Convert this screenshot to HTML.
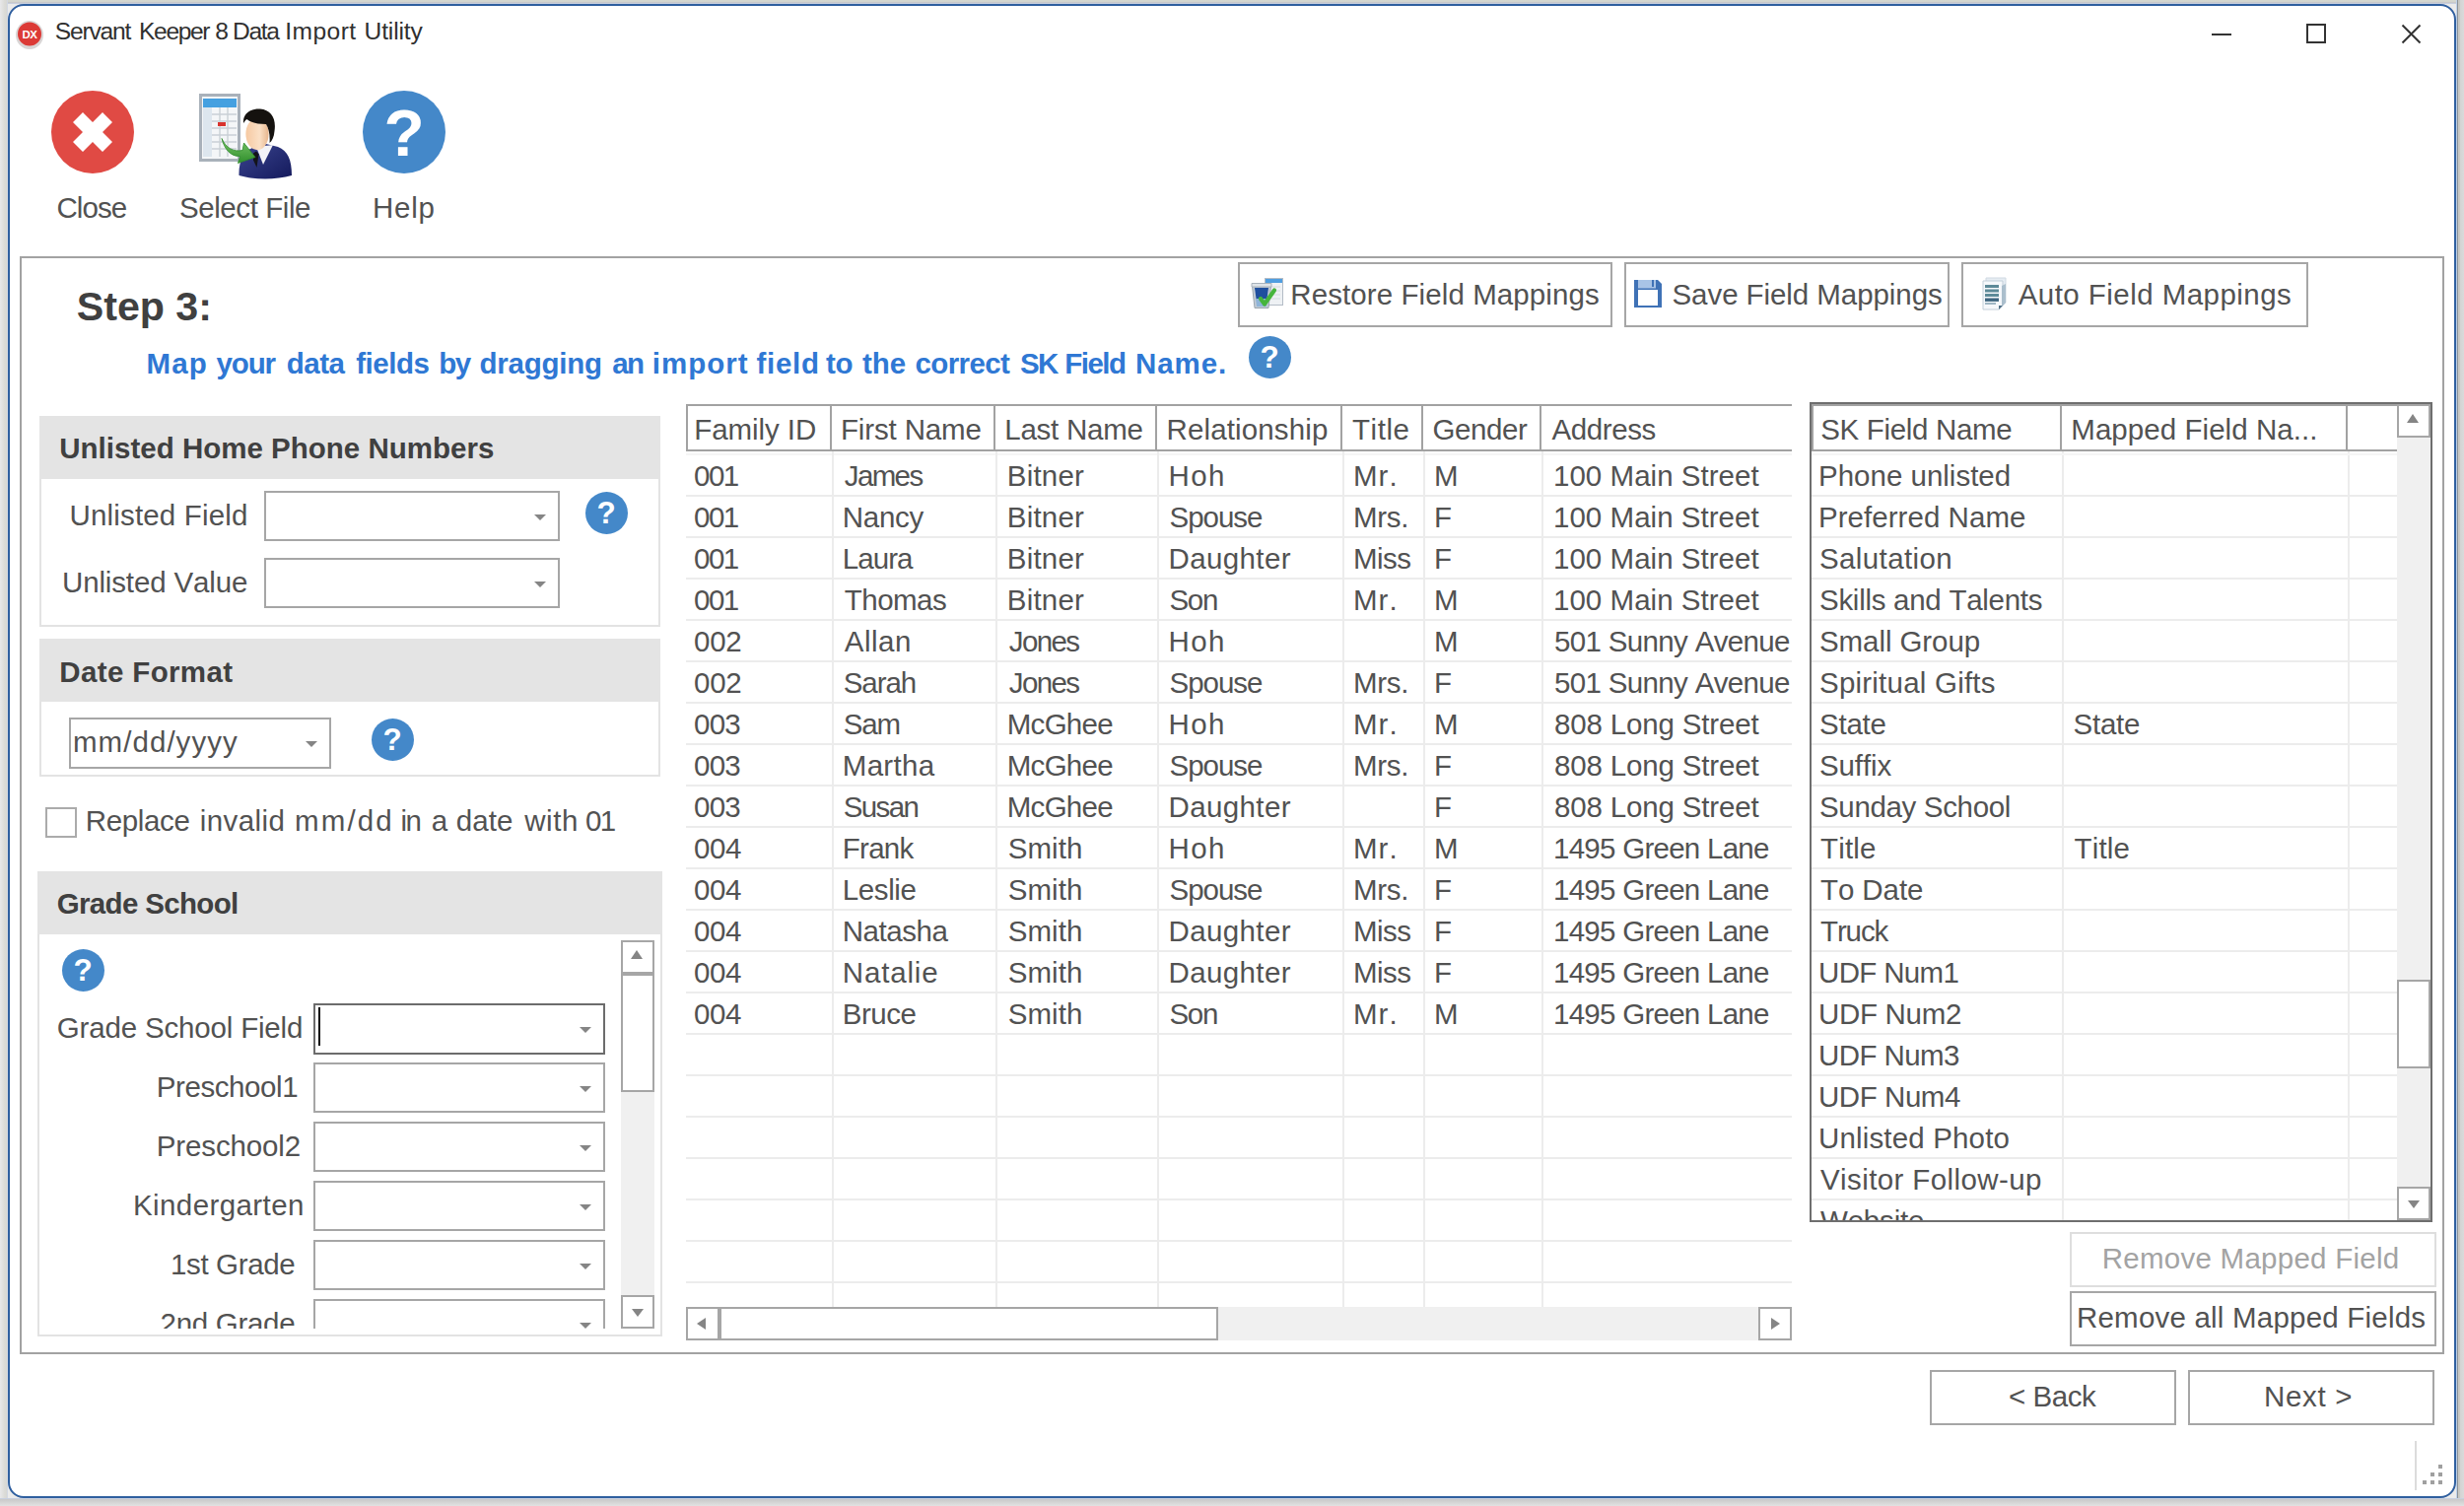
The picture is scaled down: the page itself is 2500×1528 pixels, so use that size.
<!DOCTYPE html>
<html lang="en"><head><meta charset="utf-8"><title>Servant Keeper 8 Data Import Utility</title>
<style>
html,body{margin:0;padding:0}
body{width:2500px;height:1528px;overflow:hidden;position:relative;background:#ebebeb;font-family:"Liberation Sans",sans-serif;font-size:29.5px;color:#525252;font-kerning:none}
div,.a,.t{position:absolute;box-sizing:border-box}
.t{white-space:nowrap}
#win{left:8px;top:4px;width:2484px;height:1516px;background:#fff;border:2px solid #2f5f9f;border-radius:16px;}
.hp{border-radius:50%;background:#4488c9;color:#fff;font-weight:700;text-align:center}
.ad{width:0;height:0;border-left:6px solid transparent;border-right:6px solid transparent;border-top:6px solid #858585}
.adn{width:0;height:0;border-left:6px solid transparent;border-right:6px solid transparent;border-top:8px solid #858585}
.au{width:0;height:0;border-left:6px solid transparent;border-right:6px solid transparent;border-bottom:9px solid #858585}
.al{width:0;height:0;border-top:6px solid transparent;border-bottom:6px solid transparent;border-right:9px solid #858585}
.ar{width:0;height:0;border-top:6px solid transparent;border-bottom:6px solid transparent;border-left:9px solid #858585}
</style></head>
<body>
<div style="left:0;top:0;width:2500px;height:4px;background:linear-gradient(#d5d8cf,#d3d5cf 40%,#c8c8c8 60%,#c8d2e8)"></div>
<div style="left:0;top:0;width:8px;height:1528px;background:linear-gradient(90deg,#e8e8ea,#dcdcd8 55%,#d8d8d4 80%,#d0d8e8)"></div>
<div style="left:2492px;top:0;width:8px;height:1528px;background:linear-gradient(90deg,#bed2eb 0,#bed2eb 12%,#8c9196 13%,#8c9196 25%,#c8c8c4 26%,#c8c8c4 50%,#d4d4d4 55%,#dadada)"></div>
<div style="left:0;top:1520px;width:2500px;height:8px;background:linear-gradient(#c8d0e0 0,#c8d0e0 12%,#c8c8c8 13%,#e2e2e2)"></div>
<div id="win"></div>
<svg class="a" style="left:15px;top:19px" width="30" height="32" viewBox="0 0 30 32">
<ellipse cx="15" cy="16.5" rx="14" ry="14.5" fill="#b9b3b3" opacity=".55"/>
<circle cx="15" cy="15.5" r="12" fill="#dc3a36"/>
<text x="15" y="19.6" text-anchor="middle" font-family="Liberation Sans, sans-serif" font-weight="700" font-size="11.5" letter-spacing="-0.6" fill="#fff">DX</text></svg>
<span class="t" style="left:55.75px;top:16.00px;line-height:31px;letter-spacing:-1.179px;font-size:24.6px;color:#303030;">Servant </span>
<span class="t" style="left:141.00px;top:16.00px;line-height:31px;letter-spacing:-1.353px;font-size:24.6px;color:#303030;">Keeper </span>
<span class="t" style="left:218.25px;top:16.00px;line-height:31px;letter-spacing:-0.060px;font-size:24.6px;color:#303030;">8 </span>
<span class="t" style="left:236.00px;top:16.00px;line-height:31px;letter-spacing:-1.353px;font-size:24.6px;color:#303030;">Data </span>
<span class="t" style="left:289.25px;top:16.00px;line-height:31px;letter-spacing:0.427px;font-size:24.6px;color:#303030;">Import </span>
<span class="t" style="left:369.60px;top:16.00px;line-height:31px;letter-spacing:-0.170px;font-size:24.6px;color:#303030;">Utility</span>
<svg class="a" style="left:2230px;top:14px" width="240" height="40" viewBox="0 0 240 40" fill="none" stroke="#333" stroke-width="2">
<path d="M14 21H34"/><rect x="111" y="11" width="18" height="18"/><path d="M207.5 11.5L225.5 29.5M225.5 11.5L207.5 29.5"/></svg>
<svg class="a" style="left:52px;top:92px" width="84" height="84" viewBox="0 0 84 84">
<circle cx="42" cy="42" r="42" fill="#e04a44"/>
<path d="M22 32L32 22L42 32L52 22L62 32L52 42L62 52L52 62L42 52L32 62L22 52L32 42Z" fill="#fff"/></svg>
<span class="t" style="left:57.50px;top:192.00px;line-height:37px;letter-spacing:-0.941px;">Close</span>
<svg class="a" style="left:200px;top:92px" width="100" height="92" viewBox="0 0 100 92">
<defs>
<linearGradient id="sk" x1="0" x2="1"><stop offset="0" stop-color="#f6c9a2"/><stop offset=".6" stop-color="#fbe0c6"/><stop offset="1" stop-color="#e7b58c"/></linearGradient>
<linearGradient id="su" x1="0" x2="1" y1="0" y2="1"><stop offset="0" stop-color="#3b4590"/><stop offset="1" stop-color="#141a5c"/></linearGradient>
<linearGradient id="gr" x1="0" x2="0" y1="0" y2="1"><stop offset="0" stop-color="#7cc66a"/><stop offset="1" stop-color="#2f8f2c"/></linearGradient>
</defs>
<rect x="3.5" y="4.5" width="39" height="66" fill="#f4f6f8" stroke="#a9b1ba" stroke-width="3"/>
<rect x="6" y="8" width="34" height="9" fill="#45a0e0"/>
<rect x="6" y="17" width="9" height="50" fill="#dde6ee"/>
<path d="M15 24H40M15 31H40M15 38H40M15 45H40M15 52H40M15 59H40M23 17V67M31 17V67" stroke="#c9d0d6" stroke-width="1.4"/>
<rect x="21" y="32" width="8" height="4" fill="#d9332e"/>
<path d="M42.5 86C42 70 48 61 57 57.5L66 53L82 57C92 61 96 70 96 86C80 90.5 58 90.5 42.5 86Z" fill="url(#su)"/>
<path d="M60 57L67 75L77 55Z" fill="#f3f3f7"/>
<path d="M57 63.5L60 61.5L62.5 64.5L60.5 78L57 70.5Z" fill="#14141b"/>
<ellipse cx="61" cy="44" rx="11.6" ry="16.2" fill="url(#sk)"/>
<path d="M47 33C46 23 55 18 64 18.5C75 19.5 80.5 28 78.5 41C78 47 76 51 73.5 53C74 45 73 39 70 34C63 34 55 33 50.5 29C49 30 48 31.5 47 33Z" fill="#15120f"/>
<path d="M25 48.5C29 58 37 62.5 46 60.5L47.5 53L59 67.5L41.5 73.5L43.5 66.5C34 67 27.5 59 25 48.5Z" fill="url(#gr)" stroke="#2c8a2a" stroke-width=".8"/>
</svg>
<span class="t" style="left:182.00px;top:192.00px;line-height:37px;letter-spacing:-0.431px;">Select File</span>
<div class="hp" style="left:368px;top:92px;width:84px;height:84px;font-size:67.5px;line-height:85px">?</div>
<span class="t" style="left:378.00px;top:192.00px;line-height:37px;letter-spacing:0.779px;">Help</span>
<div style="left:20px;top:260px;width:2460px;height:1114px;border:2px solid #a2a2a2"></div>
<span class="t" style="left:77.75px;top:285.00px;line-height:52px;letter-spacing:-0.017px;font-size:41.2px;font-weight:700;color:#404040;">Step 3:</span>
<span class="t" style="left:148.50px;top:350.00px;line-height:37px;letter-spacing:1.135px;font-weight:700;color:#2f78d4;">Map </span>
<span class="t" style="left:219.50px;top:350.00px;line-height:37px;letter-spacing:-1.149px;font-weight:700;color:#2f78d4;">your </span>
<span class="t" style="left:290.75px;top:350.00px;line-height:37px;letter-spacing:-0.500px;font-weight:700;color:#2f78d4;">data </span>
<span class="t" style="left:361.25px;top:350.00px;line-height:37px;letter-spacing:-0.478px;font-weight:700;color:#2f78d4;">fields </span>
<span class="t" style="left:445.25px;top:350.00px;line-height:37px;letter-spacing:-1.623px;font-weight:700;color:#2f78d4;">by </span>
<span class="t" style="left:486.50px;top:350.00px;line-height:37px;letter-spacing:-0.237px;font-weight:700;color:#2f78d4;">dragging </span>
<span class="t" style="left:621.25px;top:350.00px;line-height:37px;letter-spacing:-1.623px;font-weight:700;color:#2f78d4;">an </span>
<span class="t" style="left:661.75px;top:350.00px;line-height:37px;letter-spacing:1.011px;font-weight:700;color:#2f78d4;">import </span>
<span class="t" style="left:767.50px;top:350.00px;line-height:37px;letter-spacing:0.719px;font-weight:700;color:#2f78d4;">field </span>
<span class="t" style="left:838.00px;top:350.00px;line-height:37px;letter-spacing:-0.324px;font-weight:700;color:#2f78d4;">to </span>
<span class="t" style="left:875.00px;top:350.00px;line-height:37px;letter-spacing:-0.047px;font-weight:700;color:#2f78d4;">the </span>
<span class="t" style="left:928.50px;top:350.00px;line-height:37px;letter-spacing:-0.617px;font-weight:700;color:#2f78d4;">correct </span>
<span class="t" style="left:1035.00px;top:350.00px;line-height:37px;letter-spacing:-1.623px;font-weight:700;color:#2f78d4;">SK </span>
<span class="t" style="left:1080.25px;top:350.00px;line-height:37px;letter-spacing:-1.517px;font-weight:700;color:#2f78d4;">Field </span>
<span class="t" style="left:1152.00px;top:350.00px;line-height:37px;letter-spacing:0.913px;font-weight:700;color:#2f78d4;">Name.</span>
<div class="hp" style="left:1266.5px;top:340.5px;width:43.0px;height:43.0px;font-size:31.5px;line-height:42.0px">?</div>
<div style="left:1256px;top:266px;width:380px;height:66px;border:2px solid #a6a6a6;background:#fff"></div>
<svg class="a" style="left:1269px;top:281px" width="34" height="34" viewBox="0 0 34 34">
<rect x="14.5" y="1.5" width="18" height="27" fill="#eef1f4" stroke="#b3bcc6"/>
<rect x="15" y="2" width="17" height="4" fill="#4f9ee0"/>
<path d="M17 10H30M17 14H30M17 18H30M17 22H30" stroke="#d5dae0"/>
<path d="M1.5 9L4 31.5H18L20.5 9Z" fill="#c3ccd4" stroke="#9aa6b0"/>
<path d="M1 6.5H21V10H1Z" fill="#dfe4e8" stroke="#a8b2bc"/>
<path d="M4 11H18L16.5 22H5.5Z" fill="#1f4f9e"/>
<path d="M5 22H17L16 30H6Z" fill="#8fb4d8"/>
<path d="M10 22L14 27.5L24 13.5" stroke="#46b53c" stroke-width="4.2" fill="none" stroke-linecap="round" stroke-linejoin="round"/>
</svg>
<span class="t" style="left:1309.25px;top:280.00px;line-height:37px;letter-spacing:0.094px;">Restore Field Mappings</span>
<div style="left:1648px;top:266px;width:330px;height:66px;border:2px solid #a6a6a6;background:#fff"></div>
<svg class="a" style="left:1658px;top:284px" width="28" height="28" viewBox="0 0 28 28">
<path d="M0 0H24L28 4V28H0Z" fill="#3f72b6"/>
<rect x="4" y="0" width="18" height="8.5" fill="#a9c4e6"/>
<rect x="18" y="0" width="2" height="7" fill="#3f72b6"/>
<rect x="4" y="10" width="20" height="16" fill="#fff"/></svg>
<span class="t" style="left:1696.50px;top:280.00px;line-height:37px;letter-spacing:-0.068px;">Save Field Mappings</span>
<div style="left:1990px;top:266px;width:352px;height:66px;border:2px solid #a6a6a6;background:#fff"></div>
<svg class="a" style="left:2009px;top:280px" width="28" height="36" viewBox="0 0 28 36">
<path d="M6 2H26V27L22 31H6Z" fill="#e6edf3" stroke="#cfd9e2"/>
<path d="M3 5H23V30L19 34H3Z" fill="#f5f8fb" stroke="#c3cfd9"/>
<path d="M19 34V30H23Z" fill="#4f6f86"/>
<path d="M22 10L26 8V27L22 31Z" fill="#9eb4c4" opacity=".8"/>
<rect x="5" y="9" width="14" height="3" fill="#5d8a98"/><rect x="5" y="13.5" width="14" height="3" fill="#5d8a98"/>
<rect x="5" y="18" width="14" height="3" fill="#5d8a98"/><rect x="5" y="22.5" width="14" height="3.4" fill="#3f6680"/>
<rect x="5" y="27" width="11" height="2" fill="#9fb6c4"/>
</svg>
<span class="t" style="left:2047.75px;top:280.00px;line-height:37px;letter-spacing:0.448px;">Auto Field Mappings</span>
<div style="left:40px;top:422px;width:630px;height:214px;border:2px solid #e3e3e3;background:#fff"></div>
<div style="left:40px;top:422px;width:630px;height:64px;background:#e4e4e4"></div>
<span class="t" style="left:60.25px;top:436.00px;line-height:37px;letter-spacing:0.009px;font-weight:700;color:#404040;">Unlisted Home Phone Numbers</span>
<span class="t" style="left:70.50px;top:504.00px;line-height:37px;letter-spacing:0.169px;">Unlisted Field</span>
<div style="left:268px;top:498px;width:300px;height:51px;border:2px solid #a6a6a6;background:#fff"></div>
<div class="ad" style="left:541.5px;top:521.5px"></div>
<div class="hp" style="left:593.5px;top:499.0px;width:43.0px;height:43.0px;font-size:31.5px;line-height:42.0px">?</div>
<span class="t" style="left:63.00px;top:572.00px;line-height:37px;letter-spacing:-0.140px;">Unlisted Value</span>
<div style="left:268px;top:566px;width:300px;height:51px;border:2px solid #a6a6a6;background:#fff"></div>
<div class="ad" style="left:541.5px;top:589.5px"></div>
<div style="left:40px;top:648px;width:630px;height:140px;border:2px solid #e3e3e3;background:#fff"></div>
<div style="left:40px;top:648px;width:630px;height:64px;background:#e4e4e4"></div>
<span class="t" style="left:60.25px;top:663.00px;line-height:37px;letter-spacing:0.371px;font-weight:700;color:#404040;">Date Format</span>
<div style="left:70px;top:728px;width:266px;height:52px;border:2px solid #a6a6a6;background:#fff"></div>
<div class="ad" style="left:309.5px;top:752.0px"></div>
<span class="t" style="left:74.00px;top:734.00px;line-height:37px;letter-spacing:1.044px;">mm/dd/yyyy</span>
<div class="hp" style="left:376.5px;top:728.5px;width:43.0px;height:43.0px;font-size:31.5px;line-height:42.0px">?</div>
<div style="left:46px;top:819px;width:32px;height:31px;border:2px solid #ababab;background:#fff"></div>
<span class="t" style="left:86.75px;top:814.00px;line-height:37px;letter-spacing:-0.346px;">Replace </span>
<span class="t" style="left:202.75px;top:814.00px;line-height:37px;letter-spacing:0.421px;">invalid </span>
<span class="t" style="left:299.00px;top:814.00px;line-height:37px;letter-spacing:2.125px;">mm/dd </span>
<span class="t" style="left:406.50px;top:814.00px;line-height:37px;letter-spacing:-1.623px;">in </span>
<span class="t" style="left:437.75px;top:814.00px;line-height:37px;letter-spacing:-0.080px;">a </span>
<span class="t" style="left:462.75px;top:814.00px;line-height:37px;letter-spacing:0.080px;">date </span>
<span class="t" style="left:532.25px;top:814.00px;line-height:37px;letter-spacing:0.565px;">with </span>
<span class="t" style="left:594.00px;top:814.00px;line-height:37px;letter-spacing:-1.623px;">01</span>
<div style="left:38px;top:884px;width:634px;height:472px;border:2px solid #e3e3e3;background:#fff"></div>
<div style="left:38px;top:884px;width:634px;height:64px;background:#e4e4e4"></div>
<span class="t" style="left:57.75px;top:898.00px;line-height:37px;letter-spacing:-0.668px;font-weight:700;color:#404040;">Grade School</span>
<div class="hp" style="left:62.5px;top:962.5px;width:43.0px;height:43.0px;font-size:31.5px;line-height:42.0px">?</div>
<span class="t" style="left:57.75px;top:1024.00px;line-height:37px;letter-spacing:-0.169px;">Grade School Field</span>
<div style="left:318px;top:1018px;width:296px;height:52px;border:2px solid #6c6c6c;background:#fff"></div>
<div class="ad" style="left:587.5px;top:1042.0px"></div>
<div style="left:323px;top:1022px;width:2px;height:39px;background:#111"></div>
<span class="t" style="left:158.75px;top:1084.00px;line-height:37px;letter-spacing:-0.409px;">Preschool1</span>
<div style="left:318px;top:1078px;width:296px;height:51px;border:2px solid #a6a6a6;background:#fff"></div>
<div class="ad" style="left:587.5px;top:1101.5px"></div>
<span class="t" style="left:158.75px;top:1144.00px;line-height:37px;letter-spacing:-0.131px;">Preschool2</span>
<div style="left:318px;top:1138px;width:296px;height:51px;border:2px solid #a6a6a6;background:#fff"></div>
<div class="ad" style="left:587.5px;top:1161.5px"></div>
<span class="t" style="left:135.00px;top:1204.00px;line-height:37px;letter-spacing:0.408px;">Kindergarten</span>
<div style="left:318px;top:1198px;width:296px;height:51px;border:2px solid #a6a6a6;background:#fff"></div>
<div class="ad" style="left:587.5px;top:1221.5px"></div>
<span class="t" style="left:173.00px;top:1264.00px;line-height:37px;letter-spacing:-0.360px;">1st Grade</span>
<div style="left:318px;top:1258px;width:296px;height:51px;border:2px solid #a6a6a6;background:#fff"></div>
<div class="ad" style="left:587.5px;top:1281.5px"></div>
<div class="a" style="left:40px;top:1310px;width:586px;height:37.5px;overflow:hidden">
<div style="left:278px;top:8px;width:296px;height:51px;border:2px solid #a6a6a6;background:#fff"></div>
<div class="ad" style="left:547.5px;top:31.5px"></div>
<span class="t" style="left:122.50px;top:14.00px;line-height:37px;letter-spacing:-0.281px;">2nd Grade</span>
</div>
<div style="left:630px;top:954px;width:34px;height:394px;background:#f0f0f0"></div>
<div style="left:630px;top:954px;width:34px;height:34px;border:2px solid #a6a6a6;background:#fff"></div>
<div class="au" style="left:640.0px;top:964.0px"></div>
<div style="left:630px;top:988px;width:34px;height:120px;border:2px solid #a6a6a6;background:#fff"></div>
<div style="left:630px;top:1314px;width:34px;height:34px;border:2px solid #a6a6a6;background:#fff"></div>
<div class="adn" style="left:641.0px;top:1327.5px"></div>
<div style="left:696px;top:410px;width:1122px;height:48px;border:2px solid #a2a2a2;border-right:0;background:#fff"></div>
<div style="left:842px;top:412px;width:2px;height:44px;background:#a2a2a2"></div>
<div style="left:1008px;top:412px;width:2px;height:44px;background:#a2a2a2"></div>
<div style="left:1172px;top:412px;width:2px;height:44px;background:#a2a2a2"></div>
<div style="left:1360px;top:412px;width:2px;height:44px;background:#a2a2a2"></div>
<div style="left:1442px;top:412px;width:2px;height:44px;background:#a2a2a2"></div>
<div style="left:1562px;top:412px;width:2px;height:44px;background:#a2a2a2"></div>
<span class="t" style="left:704.25px;top:417.00px;line-height:37px;letter-spacing:-0.062px;">Family ID</span>
<span class="t" style="left:853.00px;top:417.00px;line-height:37px;letter-spacing:-0.147px;">First Name</span>
<span class="t" style="left:1019.25px;top:417.00px;line-height:37px;letter-spacing:-0.249px;">Last Name</span>
<span class="t" style="left:1183.50px;top:417.00px;line-height:37px;letter-spacing:0.141px;">Relationship</span>
<span class="t" style="left:1372.00px;top:417.00px;line-height:37px;letter-spacing:0.544px;">Title</span>
<span class="t" style="left:1453.50px;top:417.00px;line-height:37px;letter-spacing:-0.414px;">Gender</span>
<span class="t" style="left:1574.50px;top:417.00px;line-height:37px;letter-spacing:-0.412px;">Address</span>
<div style="left:696px;top:460px;width:1122px;height:2px;background:#f5f5f5"></div>
<div style="left:696px;top:502px;width:1122px;height:2px;background:#ececec"></div>
<div style="left:696px;top:544px;width:1122px;height:2px;background:#ececec"></div>
<div style="left:696px;top:586px;width:1122px;height:2px;background:#ececec"></div>
<div style="left:696px;top:628px;width:1122px;height:2px;background:#ececec"></div>
<div style="left:696px;top:670px;width:1122px;height:2px;background:#ececec"></div>
<div style="left:696px;top:712px;width:1122px;height:2px;background:#ececec"></div>
<div style="left:696px;top:754px;width:1122px;height:2px;background:#ececec"></div>
<div style="left:696px;top:796px;width:1122px;height:2px;background:#ececec"></div>
<div style="left:696px;top:838px;width:1122px;height:2px;background:#ececec"></div>
<div style="left:696px;top:880px;width:1122px;height:2px;background:#ececec"></div>
<div style="left:696px;top:922px;width:1122px;height:2px;background:#ececec"></div>
<div style="left:696px;top:964px;width:1122px;height:2px;background:#ececec"></div>
<div style="left:696px;top:1006px;width:1122px;height:2px;background:#ececec"></div>
<div style="left:696px;top:1048px;width:1122px;height:2px;background:#ececec"></div>
<div style="left:696px;top:1090px;width:1122px;height:2px;background:#ececec"></div>
<div style="left:696px;top:1132px;width:1122px;height:2px;background:#ececec"></div>
<div style="left:696px;top:1174px;width:1122px;height:2px;background:#ececec"></div>
<div style="left:696px;top:1216px;width:1122px;height:2px;background:#ececec"></div>
<div style="left:696px;top:1258px;width:1122px;height:2px;background:#ececec"></div>
<div style="left:696px;top:1300px;width:1122px;height:2px;background:#ececec"></div>
<div style="left:844px;top:458px;width:2px;height:868px;background:#ececec"></div>
<div style="left:1010px;top:458px;width:2px;height:868px;background:#ececec"></div>
<div style="left:1174px;top:458px;width:2px;height:868px;background:#ececec"></div>
<div style="left:1362px;top:458px;width:2px;height:868px;background:#ececec"></div>
<div style="left:1444px;top:458px;width:2px;height:868px;background:#ececec"></div>
<div style="left:1564px;top:458px;width:2px;height:868px;background:#ececec"></div>
<div class="a" style="left:696px;top:458px;width:1120px;height:868px;overflow:hidden">
<span class="t" style="left:8.00px;top:6.00px;line-height:37px;letter-spacing:-1.531px;">001</span>
<span class="t" style="left:160.75px;top:6.00px;line-height:37px;letter-spacing:-1.623px;">James</span>
<span class="t" style="left:325.75px;top:6.00px;line-height:37px;letter-spacing:0.202px;">Bitner</span>
<span class="t" style="left:489.50px;top:6.00px;line-height:37px;letter-spacing:1.395px;">Hoh</span>
<span class="t" style="left:677.00px;top:6.00px;line-height:37px;letter-spacing:1.051px;">Mr.</span>
<span class="t" style="left:759.00px;top:6.00px;line-height:37px;letter-spacing:-0.105px;">M</span>
<span class="t" style="left:880.00px;top:6.00px;line-height:37px;letter-spacing:0.031px;">100 Main Street</span>
<span class="t" style="left:8.00px;top:48.00px;line-height:37px;letter-spacing:-1.531px;">001</span>
<span class="t" style="left:158.75px;top:48.00px;line-height:37px;letter-spacing:-0.279px;">Nancy</span>
<span class="t" style="left:325.75px;top:48.00px;line-height:37px;letter-spacing:0.202px;">Bitner</span>
<span class="t" style="left:490.50px;top:48.00px;line-height:37px;letter-spacing:-1.029px;">Spouse</span>
<span class="t" style="left:677.00px;top:48.00px;line-height:37px;letter-spacing:-0.282px;">Mrs.</span>
<span class="t" style="left:759.00px;top:48.00px;line-height:37px;letter-spacing:-0.075px;">F</span>
<span class="t" style="left:880.00px;top:48.00px;line-height:37px;letter-spacing:0.031px;">100 Main Street</span>
<span class="t" style="left:8.00px;top:90.00px;line-height:37px;letter-spacing:-1.531px;">001</span>
<span class="t" style="left:158.75px;top:90.00px;line-height:37px;letter-spacing:-0.948px;">Laura</span>
<span class="t" style="left:325.75px;top:90.00px;line-height:37px;letter-spacing:0.202px;">Bitner</span>
<span class="t" style="left:489.50px;top:90.00px;line-height:37px;letter-spacing:0.381px;">Daughter</span>
<span class="t" style="left:677.00px;top:90.00px;line-height:37px;letter-spacing:-0.559px;">Miss</span>
<span class="t" style="left:759.00px;top:90.00px;line-height:37px;letter-spacing:-0.075px;">F</span>
<span class="t" style="left:880.00px;top:90.00px;line-height:37px;letter-spacing:0.031px;">100 Main Street</span>
<span class="t" style="left:8.00px;top:132.00px;line-height:37px;letter-spacing:-1.531px;">001</span>
<span class="t" style="left:160.75px;top:132.00px;line-height:37px;letter-spacing:-0.513px;">Thomas</span>
<span class="t" style="left:325.75px;top:132.00px;line-height:37px;letter-spacing:0.202px;">Bitner</span>
<span class="t" style="left:490.50px;top:132.00px;line-height:37px;letter-spacing:-1.341px;">Son</span>
<span class="t" style="left:677.00px;top:132.00px;line-height:37px;letter-spacing:1.051px;">Mr.</span>
<span class="t" style="left:759.00px;top:132.00px;line-height:37px;letter-spacing:-0.105px;">M</span>
<span class="t" style="left:880.00px;top:132.00px;line-height:37px;letter-spacing:0.031px;">100 Main Street</span>
<span class="t" style="left:8.00px;top:174.00px;line-height:37px;letter-spacing:-0.281px;">002</span>
<span class="t" style="left:160.75px;top:174.00px;line-height:37px;letter-spacing:0.515px;">Allan</span>
<span class="t" style="left:327.75px;top:174.00px;line-height:37px;letter-spacing:-1.623px;">Jones</span>
<span class="t" style="left:489.50px;top:174.00px;line-height:37px;letter-spacing:1.395px;">Hoh</span>
<span class="t" style="left:759.00px;top:174.00px;line-height:37px;letter-spacing:-0.105px;">M</span>
<span class="t" style="left:881.00px;top:174.00px;line-height:37px;letter-spacing:-0.660px;">501 Sunny Avenue</span>
<span class="t" style="left:8.00px;top:216.00px;line-height:37px;letter-spacing:-0.281px;">002</span>
<span class="t" style="left:159.75px;top:216.00px;line-height:37px;letter-spacing:-1.078px;">Sarah</span>
<span class="t" style="left:327.75px;top:216.00px;line-height:37px;letter-spacing:-1.623px;">Jones</span>
<span class="t" style="left:490.50px;top:216.00px;line-height:37px;letter-spacing:-1.029px;">Spouse</span>
<span class="t" style="left:677.00px;top:216.00px;line-height:37px;letter-spacing:-0.282px;">Mrs.</span>
<span class="t" style="left:759.00px;top:216.00px;line-height:37px;letter-spacing:-0.075px;">F</span>
<span class="t" style="left:881.00px;top:216.00px;line-height:37px;letter-spacing:-0.660px;">501 Sunny Avenue</span>
<span class="t" style="left:8.00px;top:258.00px;line-height:37px;letter-spacing:-0.781px;">003</span>
<span class="t" style="left:159.75px;top:258.00px;line-height:37px;letter-spacing:-1.166px;">Sam</span>
<span class="t" style="left:325.75px;top:258.00px;line-height:37px;letter-spacing:-0.717px;">McGhee</span>
<span class="t" style="left:489.50px;top:258.00px;line-height:37px;letter-spacing:1.395px;">Hoh</span>
<span class="t" style="left:677.00px;top:258.00px;line-height:37px;letter-spacing:1.051px;">Mr.</span>
<span class="t" style="left:759.00px;top:258.00px;line-height:37px;letter-spacing:-0.105px;">M</span>
<span class="t" style="left:881.00px;top:258.00px;line-height:37px;letter-spacing:-0.160px;">808 Long Street</span>
<span class="t" style="left:8.00px;top:300.00px;line-height:37px;letter-spacing:-0.781px;">003</span>
<span class="t" style="left:158.75px;top:300.00px;line-height:37px;letter-spacing:0.319px;">Martha</span>
<span class="t" style="left:325.75px;top:300.00px;line-height:37px;letter-spacing:-0.717px;">McGhee</span>
<span class="t" style="left:490.50px;top:300.00px;line-height:37px;letter-spacing:-1.029px;">Spouse</span>
<span class="t" style="left:677.00px;top:300.00px;line-height:37px;letter-spacing:-0.282px;">Mrs.</span>
<span class="t" style="left:759.00px;top:300.00px;line-height:37px;letter-spacing:-0.075px;">F</span>
<span class="t" style="left:881.00px;top:300.00px;line-height:37px;letter-spacing:-0.160px;">808 Long Street</span>
<span class="t" style="left:8.00px;top:342.00px;line-height:37px;letter-spacing:-0.781px;">003</span>
<span class="t" style="left:159.75px;top:342.00px;line-height:37px;letter-spacing:-1.623px;">Susan</span>
<span class="t" style="left:325.75px;top:342.00px;line-height:37px;letter-spacing:-0.717px;">McGhee</span>
<span class="t" style="left:489.50px;top:342.00px;line-height:37px;letter-spacing:0.381px;">Daughter</span>
<span class="t" style="left:759.00px;top:342.00px;line-height:37px;letter-spacing:-0.075px;">F</span>
<span class="t" style="left:881.00px;top:342.00px;line-height:37px;letter-spacing:-0.160px;">808 Long Street</span>
<span class="t" style="left:8.00px;top:384.00px;line-height:37px;letter-spacing:-0.406px;">004</span>
<span class="t" style="left:158.75px;top:384.00px;line-height:37px;letter-spacing:-0.727px;">Frank</span>
<span class="t" style="left:326.75px;top:384.00px;line-height:37px;letter-spacing:0.062px;">Smith</span>
<span class="t" style="left:489.50px;top:384.00px;line-height:37px;letter-spacing:1.395px;">Hoh</span>
<span class="t" style="left:677.00px;top:384.00px;line-height:37px;letter-spacing:1.051px;">Mr.</span>
<span class="t" style="left:759.00px;top:384.00px;line-height:37px;letter-spacing:-0.105px;">M</span>
<span class="t" style="left:880.00px;top:384.00px;line-height:37px;letter-spacing:-0.730px;">1495 Green Lane</span>
<span class="t" style="left:8.00px;top:426.00px;line-height:37px;letter-spacing:-0.406px;">004</span>
<span class="t" style="left:158.75px;top:426.00px;line-height:37px;letter-spacing:-0.384px;">Leslie</span>
<span class="t" style="left:326.75px;top:426.00px;line-height:37px;letter-spacing:0.062px;">Smith</span>
<span class="t" style="left:490.50px;top:426.00px;line-height:37px;letter-spacing:-1.029px;">Spouse</span>
<span class="t" style="left:677.00px;top:426.00px;line-height:37px;letter-spacing:-0.282px;">Mrs.</span>
<span class="t" style="left:759.00px;top:426.00px;line-height:37px;letter-spacing:-0.075px;">F</span>
<span class="t" style="left:880.00px;top:426.00px;line-height:37px;letter-spacing:-0.730px;">1495 Green Lane</span>
<span class="t" style="left:8.00px;top:468.00px;line-height:37px;letter-spacing:-0.406px;">004</span>
<span class="t" style="left:158.75px;top:468.00px;line-height:37px;letter-spacing:-0.453px;">Natasha</span>
<span class="t" style="left:326.75px;top:468.00px;line-height:37px;letter-spacing:0.062px;">Smith</span>
<span class="t" style="left:489.50px;top:468.00px;line-height:37px;letter-spacing:0.381px;">Daughter</span>
<span class="t" style="left:677.00px;top:468.00px;line-height:37px;letter-spacing:-0.559px;">Miss</span>
<span class="t" style="left:759.00px;top:468.00px;line-height:37px;letter-spacing:-0.075px;">F</span>
<span class="t" style="left:880.00px;top:468.00px;line-height:37px;letter-spacing:-0.730px;">1495 Green Lane</span>
<span class="t" style="left:8.00px;top:510.00px;line-height:37px;letter-spacing:-0.406px;">004</span>
<span class="t" style="left:158.75px;top:510.00px;line-height:37px;letter-spacing:0.847px;">Natalie</span>
<span class="t" style="left:326.75px;top:510.00px;line-height:37px;letter-spacing:0.062px;">Smith</span>
<span class="t" style="left:489.50px;top:510.00px;line-height:37px;letter-spacing:0.381px;">Daughter</span>
<span class="t" style="left:677.00px;top:510.00px;line-height:37px;letter-spacing:-0.559px;">Miss</span>
<span class="t" style="left:759.00px;top:510.00px;line-height:37px;letter-spacing:-0.075px;">F</span>
<span class="t" style="left:880.00px;top:510.00px;line-height:37px;letter-spacing:-0.730px;">1495 Green Lane</span>
<span class="t" style="left:8.00px;top:552.00px;line-height:37px;letter-spacing:-0.406px;">004</span>
<span class="t" style="left:158.75px;top:552.00px;line-height:37px;letter-spacing:-0.477px;">Bruce</span>
<span class="t" style="left:326.75px;top:552.00px;line-height:37px;letter-spacing:0.062px;">Smith</span>
<span class="t" style="left:490.50px;top:552.00px;line-height:37px;letter-spacing:-1.341px;">Son</span>
<span class="t" style="left:677.00px;top:552.00px;line-height:37px;letter-spacing:1.051px;">Mr.</span>
<span class="t" style="left:759.00px;top:552.00px;line-height:37px;letter-spacing:-0.105px;">M</span>
<span class="t" style="left:880.00px;top:552.00px;line-height:37px;letter-spacing:-0.730px;">1495 Green Lane</span>
</div>
<div style="left:696px;top:1326px;width:1122px;height:34px;background:#f0f0f0"></div>
<div style="left:696px;top:1326px;width:34px;height:34px;border:2px solid #a6a6a6;background:#fff"></div>
<div class="al" style="left:707px;top:1337px"></div>
<div style="left:730px;top:1326px;width:506px;height:34px;border:2px solid #a6a6a6;background:#fff"></div>
<div style="left:1784px;top:1326px;width:34px;height:34px;border:2px solid #a6a6a6;background:#fff"></div>
<div class="ar" style="left:1797px;top:1337px"></div>
<div style="left:1836px;top:408px;width:632px;height:832px;border:2px solid #6e6e6e;background:#fff"></div>
<div style="left:1838px;top:410px;width:594px;height:48px;border:2px solid #a2a2a2;border-right:0;background:#fff"></div>
<div style="left:2090px;top:412px;width:2px;height:44px;background:#a2a2a2"></div>
<div style="left:2092px;top:458px;width:2px;height:780px;background:#ececec"></div>
<div style="left:2380px;top:412px;width:2px;height:44px;background:#a2a2a2"></div>
<div style="left:2382px;top:458px;width:2px;height:780px;background:#ececec"></div>
<span class="t" style="left:1847.25px;top:417.00px;line-height:37px;letter-spacing:-0.331px;">SK Field Name</span>
<span class="t" style="left:2101.25px;top:417.00px;line-height:37px;letter-spacing:0.056px;">Mapped Field Na...</span>
<div style="left:1838px;top:460px;width:594px;height:2px;background:#f5f5f5"></div>
<div style="left:1838px;top:502px;width:594px;height:2px;background:#ececec"></div>
<div style="left:1838px;top:544px;width:594px;height:2px;background:#ececec"></div>
<div style="left:1838px;top:586px;width:594px;height:2px;background:#ececec"></div>
<div style="left:1838px;top:628px;width:594px;height:2px;background:#ececec"></div>
<div style="left:1838px;top:670px;width:594px;height:2px;background:#ececec"></div>
<div style="left:1838px;top:712px;width:594px;height:2px;background:#ececec"></div>
<div style="left:1838px;top:754px;width:594px;height:2px;background:#ececec"></div>
<div style="left:1838px;top:796px;width:594px;height:2px;background:#ececec"></div>
<div style="left:1838px;top:838px;width:594px;height:2px;background:#ececec"></div>
<div style="left:1838px;top:880px;width:594px;height:2px;background:#ececec"></div>
<div style="left:1838px;top:922px;width:594px;height:2px;background:#ececec"></div>
<div style="left:1838px;top:964px;width:594px;height:2px;background:#ececec"></div>
<div style="left:1838px;top:1006px;width:594px;height:2px;background:#ececec"></div>
<div style="left:1838px;top:1048px;width:594px;height:2px;background:#ececec"></div>
<div style="left:1838px;top:1090px;width:594px;height:2px;background:#ececec"></div>
<div style="left:1838px;top:1132px;width:594px;height:2px;background:#ececec"></div>
<div style="left:1838px;top:1174px;width:594px;height:2px;background:#ececec"></div>
<div style="left:1838px;top:1216px;width:594px;height:2px;background:#ececec"></div>
<div class="a" style="left:1838px;top:458px;width:594px;height:780px;overflow:hidden">
<span class="t" style="left:7.00px;top:6.00px;line-height:37px;letter-spacing:-0.002px;">Phone unlisted</span>
<span class="t" style="left:7.00px;top:48.00px;line-height:37px;letter-spacing:0.042px;">Preferred Name</span>
<span class="t" style="left:8.00px;top:90.00px;line-height:37px;letter-spacing:0.383px;">Salutation</span>
<span class="t" style="left:8.00px;top:132.00px;line-height:37px;letter-spacing:-0.276px;">Skills and Talents</span>
<span class="t" style="left:8.00px;top:174.00px;line-height:37px;letter-spacing:-0.079px;">Small Group</span>
<span class="t" style="left:8.00px;top:216.00px;line-height:37px;letter-spacing:0.220px;">Spiritual Gifts</span>
<span class="t" style="left:8.00px;top:258.00px;line-height:37px;letter-spacing:-0.244px;">State</span>
<span class="t" style="left:265.50px;top:258.00px;line-height:37px;letter-spacing:-0.244px;">State</span>
<span class="t" style="left:8.00px;top:300.00px;line-height:37px;letter-spacing:-0.106px;">Suffix</span>
<span class="t" style="left:8.00px;top:342.00px;line-height:37px;letter-spacing:-0.345px;">Sunday School</span>
<span class="t" style="left:9.00px;top:384.00px;line-height:37px;letter-spacing:0.169px;">Title</span>
<span class="t" style="left:266.50px;top:384.00px;line-height:37px;letter-spacing:0.169px;">Title</span>
<span class="t" style="left:9.00px;top:426.00px;line-height:37px;letter-spacing:-0.088px;">To Date</span>
<span class="t" style="left:9.00px;top:468.00px;line-height:37px;letter-spacing:-1.125px;">Truck</span>
<span class="t" style="left:7.00px;top:510.00px;line-height:37px;letter-spacing:-0.658px;">UDF Num1</span>
<span class="t" style="left:7.00px;top:552.00px;line-height:37px;letter-spacing:-0.301px;">UDF Num2</span>
<span class="t" style="left:7.00px;top:594.00px;line-height:37px;letter-spacing:-0.587px;">UDF Num3</span>
<span class="t" style="left:7.00px;top:636.00px;line-height:37px;letter-spacing:-0.444px;">UDF Num4</span>
<span class="t" style="left:7.00px;top:678.00px;line-height:37px;letter-spacing:0.157px;">Unlisted Photo</span>
<span class="t" style="left:9.00px;top:720.00px;line-height:37px;letter-spacing:0.398px;">Visitor Follow-up</span>
<span class="t" style="left:9.00px;top:762.00px;line-height:37px;letter-spacing:-0.193px;">Website</span>
</div>
<div style="left:2432px;top:410px;width:34px;height:828px;background:#f0f0f0"></div>
<div style="left:2432px;top:410px;width:34px;height:34px;border:2px solid #a6a6a6;background:#fff"></div>
<div class="au" style="left:2442.0px;top:420.0px"></div>
<div style="left:2432px;top:994px;width:34px;height:90px;border:2px solid #a6a6a6;background:#fff"></div>
<div style="left:2432px;top:1204px;width:34px;height:34px;border:2px solid #a6a6a6;background:#fff"></div>
<div class="adn" style="left:2443.0px;top:1217.5px"></div>
<div style="left:2100px;top:1250px;width:372px;height:56px;border:2px solid #dedede;background:#fff"></div>
<span class="t" style="left:2132.75px;top:1258.00px;line-height:37px;letter-spacing:0.257px;color:#a3a3a3;">Remove Mapped Field</span>
<div style="left:2100px;top:1310px;width:372px;height:56px;border:2px solid #a6a6a6;background:#fff"></div>
<span class="t" style="left:2107.00px;top:1318.00px;line-height:37px;letter-spacing:0.207px;">Remove all Mapped Fields</span>
<div style="left:1958px;top:1390px;width:250px;height:56px;border:2px solid #a6a6a6;background:#fff"></div>
<span class="t" style="left:2038.00px;top:1398.00px;line-height:37px;letter-spacing:-0.451px;">&lt; Back</span>
<div style="left:2220px;top:1390px;width:250px;height:56px;border:2px solid #a6a6a6;background:#fff"></div>
<span class="t" style="left:2297.00px;top:1398.00px;line-height:37px;letter-spacing:0.679px;">Next &gt;</span>
<div style="left:2450px;top:1462px;width:2px;height:50px;background:#dcdcdc"></div>
<div style="left:2474px;top:1486px;width:4px;height:4px;background:#a0a0a0"></div>
<div style="left:2466px;top:1494px;width:4px;height:4px;background:#a0a0a0"></div>
<div style="left:2474px;top:1494px;width:4px;height:4px;background:#a0a0a0"></div>
<div style="left:2458px;top:1502px;width:4px;height:4px;background:#a0a0a0"></div>
<div style="left:2466px;top:1502px;width:4px;height:4px;background:#a0a0a0"></div>
<div style="left:2474px;top:1502px;width:4px;height:4px;background:#a0a0a0"></div>
</body></html>
